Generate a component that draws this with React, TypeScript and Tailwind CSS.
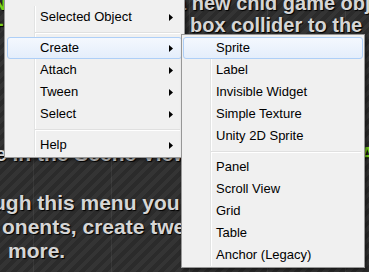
import React from "react";

const Arrow = () => (
  <svg width="4" height="7" viewBox="0 0 4 7" className="shrink-0">
    <polygon points="0,0 4,3.5 0,7" fill="#000" />
  </svg>
);

type Item = { label: string; arrow?: boolean; active?: boolean } | { sep: number };

const Menu = ({ items, showArrows }: { items: Item[]; showArrows: boolean }) => (
  <div className="relative">
    <div className="absolute top-0 bottom-0 left-[27px] w-[2px] flex">
      <div className="w-px bg-[#e2e3e3]" />
      <div className="w-px bg-white" />
    </div>
    <div className="relative flex flex-col">
      {items.map((it, i) =>
        "sep" in it ? (
          <div key={i} className={"flex flex-col justify-center ml-[28px] mr-[2px] " + (it.sep === 9 ? "h-[9px]" : "h-[8px]")}>
            <div className="h-px bg-[#e0e0e0]" />
            <div className="h-px bg-white" />
          </div>
        ) : (
          <div
            key={i}
            className={
              "h-[22px] flex items-center justify-between pl-[32px] pr-[8px] rounded-[3px] border " +
              (it.active
                ? "border-[#aecff7] bg-linear-to-b from-[#f4f8fe] to-[#e4eefb]"
                : "border-transparent")
            }
          >
            <span className="leading-[20px]">{it.label}</span>
            {showArrows && it.arrow ? <Arrow /> : null}
          </div>
        )
      )}
    </div>
  </div>
);

export default function App() {
  const font = { fontFamily: '"Liberation Sans", Arial, sans-serif' };
  const mainItems: Item[] = [
    { label: "Selected Object", arrow: true },
    { sep: 9 },
    { label: "Create", arrow: true, active: true },
    { label: "Attach", arrow: true },
    { label: "Tween", arrow: true },
    { label: "Select", arrow: true },
    { sep: 9 },
    { label: "Help", arrow: true },
  ];
  const subItems: Item[] = [
    { label: "Sprite", active: true },
    { label: "Label" },
    { label: "Invisible Widget" },
    { label: "Simple Texture" },
    { label: "Unity 2D Sprite" },
    { sep: 9 },
    { label: "Panel" },
    { label: "Scroll View" },
    { label: "Grid" },
    { label: "Table" },
    { label: "Anchor (Legacy)" },
  ];
  return (
    <div
      className="relative w-[369px] h-[272px] overflow-hidden bg-[#2e2e2e] [background-image:linear-gradient(90deg,rgba(255,255,255,0.06)_1px,transparent_1px),repeating-linear-gradient(135deg,#2b2b2b_0px,#2b2b2b_4px,#343434_4px,#343434_8px)] [background-size:78px_100%,auto] [background-position:33px_0,0_0]"
      style={font}
    >
      {/* background text */}
      <div className="flex flex-col font-bold text-[#d6d6d6] whitespace-nowrap [text-shadow:1px_1px_1px_#000]">
        <div className="mt-[-8px] text-[20px] leading-[22px] flex">
          <span className="ml-[-8px] w-[183px] shrink-0 text-[#7ad21c] text-right pr-[180px]">N</span>
          <span>a new chid game object</span>
        </div>
        <div className="text-[20px] leading-[22px] flex">
          <span className="ml-[-8px] w-[198px] shrink-0 text-[#7ad21c] text-right pr-[195px]">+</span>
          <span>box collider to the</span>
        </div>
        <div className="mt-[106px] text-[21px] leading-[24px] flex justify-between">
          <span className="ml-[-5px]">e in the Scene View</span>
          <span className="mr-[-30px] text-[#7ad21c]">ALT</span>
        </div>
        <div className="mt-[25px] text-[21px] leading-[24px] ml-[-7px]">ugh this menu you can</div>
        <div className="text-[21px] leading-[24px] ml-[2px]">onents, create tweens</div>
        <div className="text-[21px] leading-[24px] ml-[8px]">more.</div>
      </div>

      {/* main menu */}
      <div className="absolute left-[4px] top-[-1px] w-[181px] border border-[#979797] bg-[#f0f0f0] pt-[6px] pb-[1px] px-[2px] text-[13px] text-black shadow-[2px_2px_3px_rgba(0,0,0,0.45)]">
        <Menu items={mainItems} showArrows={true} />
      </div>

      {/* submenu */}
      <div className="absolute left-[181px] top-[34px] w-[184px] border border-[#979797] bg-[#f0f0f0] pt-[2px] pb-[1px] px-[1px] text-[13px] text-black shadow-[2px_2px_3px_rgba(0,0,0,0.45)]">
        <Menu items={subItems} showArrows={false} />
      </div>
    </div>
  );
}
